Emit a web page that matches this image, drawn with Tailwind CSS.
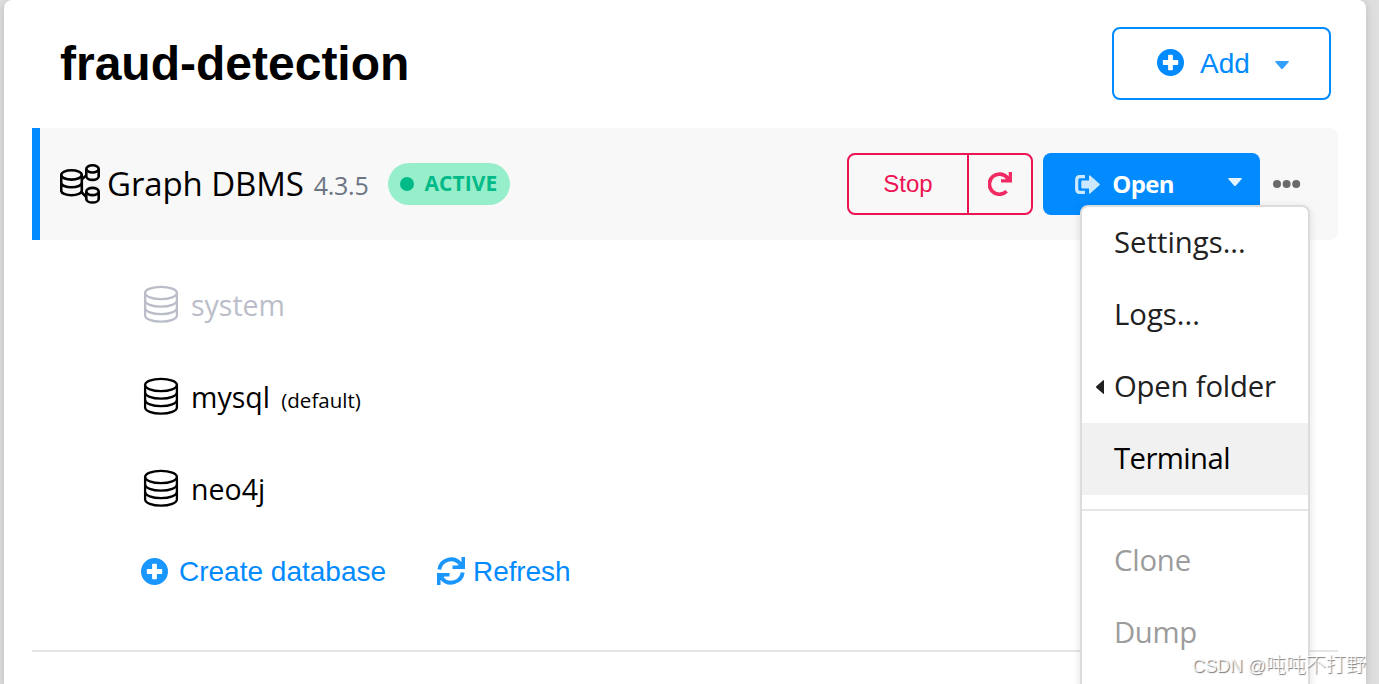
<!DOCTYPE html>
<html lang="en">

<head>
    <meta charset="UTF-8">
    <meta name="viewport" content="width=device-width, initial-scale=1.0">
    <title>fraud-detection</title>
    <script src="https://cdn.jsdelivr.net/npm/@tailwindcss/browser@4"></script>
</head>

<body class="h-[684px] overflow-hidden bg-[#dedede] font-['Liberation_Sans',Arial,sans-serif] text-black">
    <!-- Shared icons -->
    <svg class="hidden">
        <symbol id="db" viewBox="0 0 36 38">
            <g fill="none" stroke="currentColor" stroke-width="2.3">
                <ellipse cx="18" cy="8" rx="15.9" ry="6.1" />
                <path d="M2.1 8v22.500c0 3.400 7.100 6.100 15.900 6.100s15.900-2.700 15.900-6.100V8" />
                <path d="M2.1 15.5c0 3.400 7.100 6.100 15.900 6.100s15.900-2.700 15.900-6.100" />
                <path d="M2.1 23c0 3.400 7.100 6.100 15.900 6.100s15.900-2.700 15.900-6.100" />
            </g>
        </symbol>
        <symbol id="plus" viewBox="0 0 27 27">
            <path fill="currentColor" fill-rule="evenodd" d="M13.5 0a13.5 13.5 0 1 1 0 27a13.5 13.5 0 1 1 0-27zM11.8 5.8a.7.7 0 0 0-.7.7v4.6H6.5a.7.7 0 0 0-.7.7v3.4a.7.7 0 0 0 .7.7h4.6v4.6a.7.7 0 0 0 .7.7h3.4a.7.7 0 0 0 .7-.7v-4.6h4.6a.7.7 0 0 0 .7-.7v-3.4a.7.7 0 0 0-.7-.7h-4.6V6.5a.7.7 0 0 0-.7-.7z" />
        </symbol>
        <symbol id="caret" viewBox="0 0 14 8">
            <path fill="currentColor" d="M.8 0h12.4q1.2 0 .5 1L8 7.4q-1 1-2 0L.3 1Q-.4 0 .8 0z" />
        </symbol>
    </svg>

    <div class="relative ml-1 h-[684px] w-[1362px] rounded-t-lg bg-white px-7 shadow-[0_2px_8px_rgba(0,0,0,0.16)]">
        <!-- Project header -->
        <header class="flex h-32 items-start justify-between pt-[27px] pr-[7px] pl-7">
            <h1 class="text-[48px] leading-[73px] font-bold">fraud-detection</h1>
            <button class="flex h-[73px] w-[219px] items-center rounded-lg border-2 border-[#018bff] pl-[43px] text-[28px] text-[#018bff]">
                <svg class="-mt-0.5 size-[27px]"><use href="#plus" /></svg>
                <span class="ml-4">Add</span>
                <svg class="mt-0.5 ml-[25px] h-2 w-3.5 text-[#339fff]"><use href="#caret" /></svg>
            </button>
        </header>

        <!-- DBMS row -->
        <section class="flex h-28 items-center rounded-r-lg border-l-8 border-[#018bff] bg-[#f8f8f8] pl-5">
            <svg class="h-10 w-10 shrink-0" viewBox="0 0 40 40" fill="none" stroke="currentColor" stroke-width="2.6">
                <ellipse cx="11.5" cy="10.9" rx="10.3" ry="4.7" />
                <path d="M1.2 10.9V26.5c0 2.7 4.6 4.7 10.3 4.7s10.3-2 10.3-4.7V10.9M1.2 18.6c0 2.7 4.6 4.7 10.3 4.7s10.3-2 10.3-4.7" />
                <ellipse cx="32.5" cy="4.9" rx="6.2" ry="3.6" />
                <path d="M26.3 4.9v7.4c0 2.1 2.7 3.6 6.2 3.6s6.2-1.5 6.2-3.600V4.900" />
                <ellipse cx="32.5" cy="27.5" rx="6.2" ry="3.6" />
                <path d="M26.3 27.5v7.4c0 2.1 2.7 3.6 6.2 3.6s6.2-1.5 6.2-3.600v-7.400M21.800 15.400l4.400-4M21 27.500l5.300 5.600" />
            </svg>
            <div class="ml-[7px] flex items-baseline font-['Open_Sans',sans-serif]">
                <span class="text-[33px] leading-[44px] tracking-[-0.1px]">Graph DBMS</span>
                <span class="relative -top-px ml-2.5 text-[25px] tracking-[-0.3px] text-[#6b7582]">4.3.5</span>
            </div>
            <div class="mr-auto ml-5 flex h-[42px] w-[122px] items-center rounded-full bg-[#97eecb] pl-3 font-['Open_Sans',sans-serif] text-[21px] font-bold text-[#00ba88]">
                <span class="mr-2.5 size-3.5 rounded-full bg-[#00ba88]"></span>
                <span class="tracking-[0.1px]">ACTIVE</span>
            </div>

            <div class="mr-[37px] flex h-[62px] items-center">
                <div class="flex h-full w-[186px] rounded-lg border-2 border-[#ed1252] text-[24px] text-[#ed1252]">
                    <button class="w-[118px]">Stop</button>
                    <button class="flex grow items-center justify-center border-l-2 border-[#ed1252]">
                        <svg class="h-6 w-6" viewBox="0 0 24 24">
                            <path d="M18.6 19.3A10.1 10.1 0 1 1 19.5 6" fill="none" stroke="#f12a63" stroke-width="3.7" />
                            <path d="M20.7 0H24v10.4H13V7.3h4.2L20.7 4z" fill="#f12a63" />
                        </svg>
                    </button>
                </div>
                <button class="ml-2.5 flex h-full w-[217px] items-center rounded-lg bg-[#018bff] pl-8 font-['Open_Sans',sans-serif] text-[24px] font-bold text-white">
                    <svg class="h-[19px] w-[25px]" viewBox="0 0 25 19">
                        <path d="M10 1.7H4.8Q1.7 1.7 1.7 4.8v9.4Q1.7 17.3 4.8 17.3H10" fill="none" stroke="#cce8ff" stroke-width="3.2" />
                        <path d="M7.5 5.5H14V1.2q0-1.8 1.4-.5l9 8q.8.8 0 1.6l-9 8q-1.4 1.3-1.4-.5v-4.3H7.5q-1.2 0-1.2-1.2V6.7q0-1.2 1.2-1.2z" fill="#cce8ff" />
                    </svg>
                    <span class="ml-3 w-[62px] tracking-[-0.7px]">Open</span>
                    <svg class="-mt-1 ml-[54px] h-2 w-3.5 text-[#e5f3ff]"><use href="#caret" /></svg>
                </button>
                <button class="-mt-px ml-[13px]">
                    <svg class="h-2 w-7" viewBox="0 0 28 8" fill="#6a6a6a">
                        <circle cx="4" cy="4" r="4" />
                        <circle cx="13.6" cy="4" r="4" />
                        <circle cx="23.2" cy="4" r="4" />
                    </svg>
                </button>
            </div>
        </section>

        <!-- Databases -->
        <ul class="mt-[19px] pl-[111px] font-['Open_Sans',sans-serif] text-[28.5px]">
            <li class="flex h-[92px] items-center text-[#bbbec9]">
                <svg class="-mt-0.5 h-[38px] w-9"><use href="#db" /></svg>
                <span class="ml-3">system</span>
            </li>
            <li class="flex h-[92px] items-center">
                <svg class="-mt-0.5 h-[38px] w-9"><use href="#db" /></svg>
                <span class="ml-3">mysql <small class="ml-1 text-[20.5px]">(default)</small></span>
            </li>
            <li class="flex h-[92px] items-center">
                <svg class="-mt-0.5 h-[38px] w-9"><use href="#db" /></svg>
                <span class="ml-3">neo4j</span>
            </li>
        </ul>

        <div class="flex h-[117px] items-start border-b-2 border-[#e6e6e6] pt-[21px] pl-[109px] text-[28px] leading-8 text-[#018bff]">
            <button class="flex items-center">
                <svg class="-mt-0.5 size-[27px] text-[#1a96ff]"><use href="#plus" /></svg>
                <span class="ml-[11px]">Create database</span>
            </button>
            <button class="ml-[51px] flex items-center">
                <svg class="-mt-0.5 h-7 w-7 text-[#1a96ff]" viewBox="0 0 28 28">
                    <path d="M2.3 12.5A11.8 11.8 0 0 1 23 6.5M25.7 15.5A11.8 11.8 0 0 1 5 21.5" fill="none" stroke="currentColor" stroke-width="3.9" />
                    <path d="M24.5 0H28v12H15.5V8.6h5l4-4zM3.5 28H0V16h12.5v3.4h-5l-4 4z" fill="currentColor" />
                </svg>
                <span class="ml-2 tracking-[-0.1px]">Refresh</span>
            </button>
        </div>

        <!-- Actions menu -->
        <div class="absolute top-[205px] left-[1076px] h-[500px] w-[230px] rounded-lg border-2 border-[#dcdcdc] bg-white font-['Open_Sans',sans-serif] text-[29.3px] text-[#212121] shadow-[0_2px_8px_rgba(0,0,0,0.12)]">
            <div class="flex h-[72px] items-center pl-8">Settings...</div>
            <div class="flex h-[72px] items-center pl-8">Logs...</div>
            <div class="flex h-[72px] items-center pl-3.5 tracking-[-0.2px]">
                <svg class="mr-2.5 h-3.5 w-2" viewBox="0 0 8 14"><path d="M8 .5v13q0 .8-.8.2L.3 7.7q-.5-.7 0-1.4L7.2.3Q8-.3 8 .5z" fill="currentColor" /></svg>
                Open folder
            </div>
            <div class="flex h-[72px] items-center bg-[#f1f1f1] pl-8 tracking-[-0.6px] text-black">Terminal</div>
            <hr class="my-3.5 border-t-2 border-[#e6e6e6]">
            <div class="flex h-[72px] items-center pl-8 tracking-[-0.2px] text-[#9c9c9c]">Clone</div>
            <div class="flex h-[72px] items-center pl-8 tracking-[-0.4px] text-[#9c9c9c]">Dump</div>
        </div>

        <p class="absolute top-[652px] left-[1188px] font-['Liberation_Sans','Noto_Sans_CJK_SC',sans-serif] text-[20px] leading-[26px] font-light whitespace-nowrap text-white/85 [text-shadow:1px_1px_1px_#777]"><span class="text-[18px] tracking-[-0.1px]">CSDN @</span>吨吨不打野</p>
    </div>
</body>

</html>
